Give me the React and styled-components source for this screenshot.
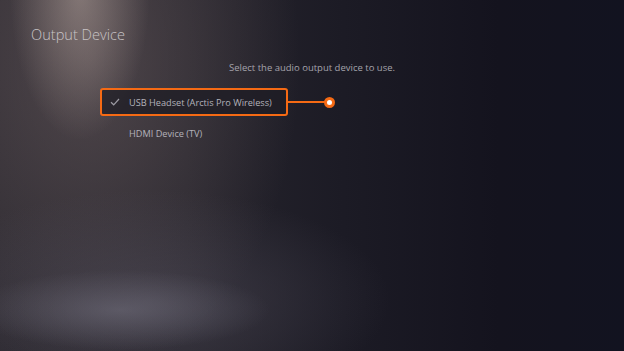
import React from 'react';
import styled, { createGlobalStyle } from 'styled-components';

const GlobalStyle = createGlobalStyle`
    html, body {
        margin: 0;
        padding: 0;
        background: #15141e;
    }
    * {
        box-sizing: border-box;
    }
`;

const Screen = styled.div`
    width: 624px;
    height: 351px;
    overflow: hidden;
    font-family: "Open Sans", "Noto Sans", sans-serif;
    background:
        radial-gradient(ellipse 70px 150px at 80px -10px, rgba(215, 195, 185, 0.42), rgba(215, 195, 185, 0) 100%),
        radial-gradient(ellipse 150px 40px at 120px 310px, rgba(120, 118, 132, 0.5), rgba(120, 118, 132, 0) 100%),
        radial-gradient(ellipse 240px 110px at 150px 300px, rgba(90, 86, 100, 0.45), rgba(90, 86, 100, 0) 100%),
        radial-gradient(ellipse 210px 320px at 90px 60px, rgba(110, 96, 98, 0.55), rgba(110, 96, 98, 0) 100%),
        linear-gradient(90deg, #2c2930 0%, #26242c 30%, #1c1b25 55%, #14131e 80%, #121320 100%);
    padding: 24px 0 0 0;
`;

const Title = styled.h1`
    margin: 0 0 0 31px;
    font-size: 14.6px;
    font-weight: 300;
    line-height: 20px;
    color: #c9c4c6;
`;

const Subtitle = styled.p`
    margin: 17px 0 0 0;
    text-align: center;
    font-size: 9.5px;
    line-height: 14px;
    color: #a4a3ab;
`;

const List = styled.ul`
    list-style: none;
    margin: 13px 0 0 100px;
    padding: 0;
    display: flex;
    flex-direction: column;
    gap: 3px;
`;

const Item = styled.li`
    position: relative;
    width: 188px;
    height: 28px;
    display: flex;
    align-items: center;
    padding-left: 8px;
    border: ${p => (p.$selected ? '2px solid #f56a14' : '2px solid transparent')};
    border-radius: 3px;
    background: ${p => (p.$selected ? 'rgba(30, 28, 36, 0.75)' : 'transparent')};
`;

const Check = styled.span`
    width: 12px;
    display: flex;
    align-items: center;
    margin-right: 7px;
`;

const Label = styled.span`
    font-size: 9.2px;
    color: #b3b2ba;
    white-space: nowrap;
`;

const Connector = styled.span`
    position: absolute;
    left: 186px;
    top: 50%;
    width: 38px;
    height: 2px;
    margin-top: -1px;
    background: #f56a14;
`;

const Dot = styled.span`
    position: absolute;
    left: 222px;
    top: 50%;
    width: 11px;
    height: 11px;
    margin-top: -5.5px;
    border-radius: 50%;
    background: #ffffff;
    border: 3px solid #f56a14;
`;

const CheckIcon = () => (
    <svg width="10" height="8" viewBox="0 0 10 8">
        <path d="M1 4.2 L3.7 6.8 L9 1" fill="none" stroke="#9c9aa3" strokeWidth="1.2" />
    </svg>
);

const devices = [
    { name: 'USB Headset (Arctis Pro Wireless)', selected: true },
    { name: 'HDMI Device (TV)', selected: false },
];

const App = () => {
    return (
        <>
            <GlobalStyle />
            <Screen>
                <Title>Output Device</Title>
                <Subtitle>Select the audio output device to use.</Subtitle>
                <List>
                    {devices.map(d => (
                        <Item key={d.name} $selected={d.selected}>
                            <Check>{d.selected && <CheckIcon />}</Check>
                            <Label>{d.name}</Label>
                            {d.selected && (
                                <>
                                    <Connector />
                                    <Dot />
                                </>
                            )}
                        </Item>
                    ))}
                </List>
            </Screen>
        </>
    );
};

export default App;
